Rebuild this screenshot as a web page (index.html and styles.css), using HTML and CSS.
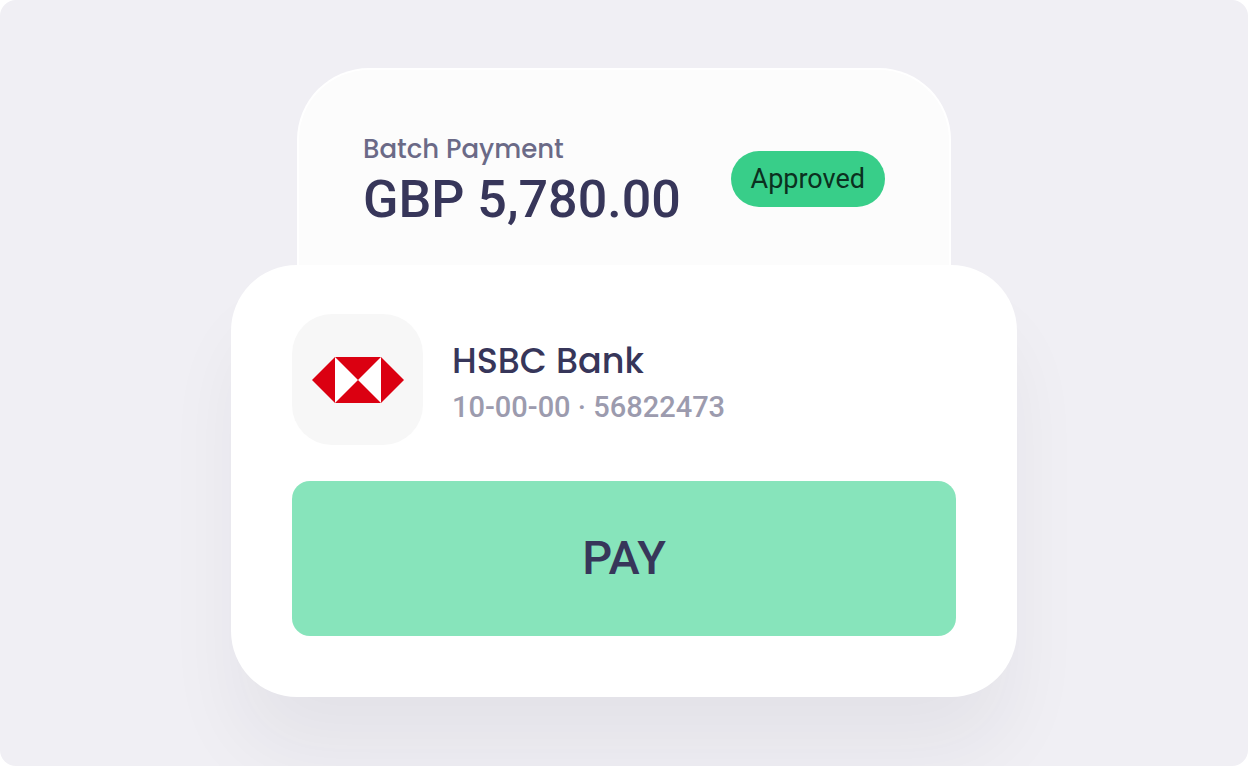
FILE: index.html
```html
<!DOCTYPE html>
<html lang="en">
<head>
<meta charset="utf-8">
<meta name="viewport" content="width=device-width, initial-scale=1">
<title>Batch Payment</title>
<link rel="stylesheet" href="styles.css">
</head>
<body>
<main class="stage">
  <section class="summary">
    <div class="summary-text">
      <p class="summary-label">Batch Payment</p>
      <p class="summary-amount">GBP 5,780.00</p>
    </div>
    <span class="badge">Approved</span>
  </section>
  <section class="card">
    <div class="bank">
      <div class="bank-logo">
        <svg viewBox="0 0 92 46" aria-label="HSBC" role="img">
          <path fill="#fff" d="M23 0h46v46H23z"/>
          <path fill="#db0011" d="M23 0h46L46 23zM23 46h46L46 23zM23 0v46L0 23zM69 0v46l23-23z"/>
        </svg>
      </div>
      <div class="bank-text">
        <h1 class="bank-name">HSBC Bank</h1>
        <p class="bank-account">10-00-00 · 56822473</p>
      </div>
    </div>
    <button class="pay" type="button">PAY</button>
  </section>
</main>
</body>
</html>
```
FILE: styles.css
```css
* {
  box-sizing: border-box;
}

body {
  margin: 0;
  background: #fff;
  color: #37365a;
  font-family: Roboto, sans-serif;
}

p,
h1 {
  margin: 0;
}

.stage {
  display: flex;
  flex-direction: column;
  align-items: center;
  min-height: calc(100vh - 1px);
  padding: 68px 24px 69px;
  border-radius: 16px;
  background: #f0eff4;
  overflow: hidden;
}

.summary {
  display: flex;
  justify-content: space-between;
  align-items: flex-start;
  width: 100%;
  max-width: 654px;
  padding: 62px 64px 31px;
  border: 2px solid #fff;
  border-bottom: 0;
  border-radius: 72px 72px 0 0;
  background: #fcfcfc;
}

.summary-label {
  color: #6b6a87;
  font-family: Poppins, Inter, sans-serif;
  font-size: 26px;
  font-weight: 500;
  line-height: 34px;
}

.summary-amount {
  font-size: 52px;
  font-weight: 500;
  line-height: 68px;
}

.badge {
  margin-top: 19px;
  padding: 0 20px;
  border-radius: 28px;
  background: #38ce89;
  color: #0b3020;
  font-size: 27px;
  line-height: 56px;
}

.card {
  width: 100%;
  max-width: 786px;
  padding: 49px 61px 61px;
  border-radius: 66px;
  background: #fff;
  box-shadow: 0 60px 80px -8px rgba(40, 40, 50, 0.06);
}

.bank {
  display: flex;
  align-items: center;
  gap: 29px;
}

.bank-logo {
  display: flex;
  align-items: center;
  justify-content: center;
  width: 131px;
  height: 131px;
  border-radius: 40px;
  background: #f7f7f7;
}

.bank-logo svg {
  width: 92px;
  height: 46px;
}

.bank-text {
  padding-top: 6px;
}

.bank-name {
  font-family: Poppins, Inter, sans-serif;
  font-size: 35px;
  font-weight: 500;
  line-height: 48px;
}

.bank-account {
  color: #9c9bae;
  font-size: 29px;
  font-weight: 500;
  line-height: 44px;
}

.pay {
  display: block;
  width: 100%;
  margin-top: 36px;
  padding: 0 0 2px;
  border: 0;
  border-radius: 18px;
  background: #87e4bb;
  color: #37365a;
  font-family: Roboto, sans-serif;
  font-size: 47px;
  font-weight: 500;
  line-height: 153px;
}
```
